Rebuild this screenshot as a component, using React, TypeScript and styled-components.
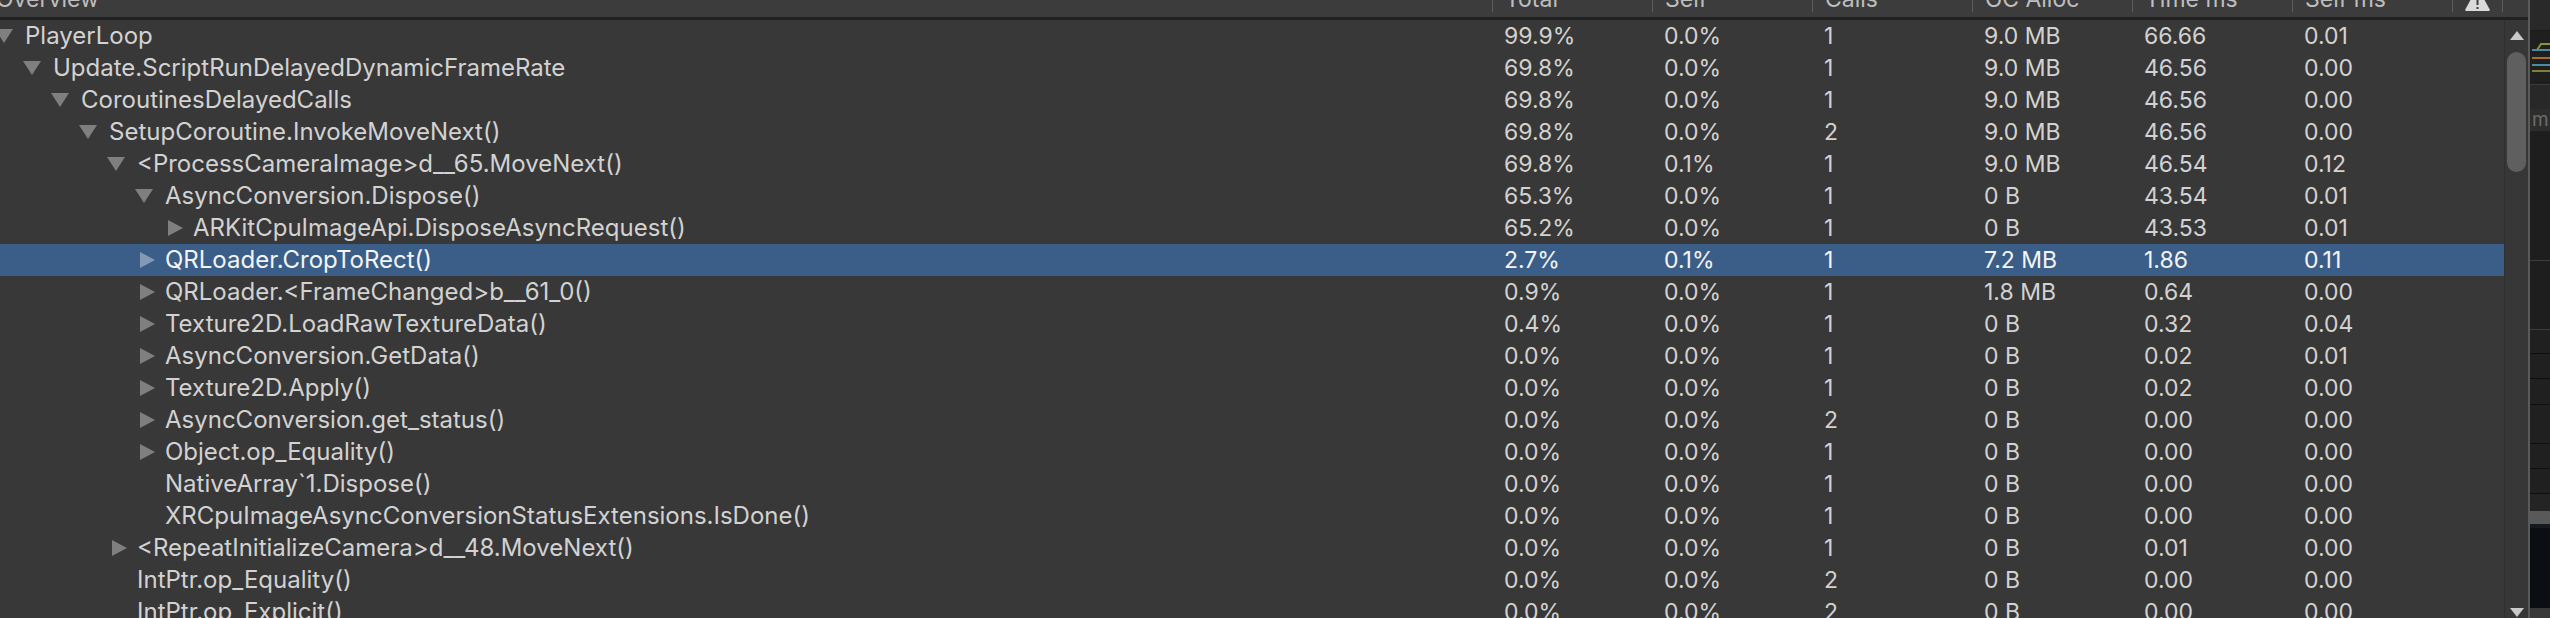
import React from 'react';
import styled, { createGlobalStyle } from 'styled-components';

type Fold = 'open' | 'closed' | 'none';

interface Sample {
  name: string;
  depth: number;
  fold: Fold;
  total: string;
  self: string;
  calls: string;
  gc: string;
  time: string;
  selfMs: string;
  selected?: boolean;
}

const samples: Sample[] = [
  { name: 'PlayerLoop', depth: 0, fold: 'open', total: '99.9%', self: '0.0%', calls: '1', gc: '9.0 MB', time: '66.66', selfMs: '0.01' },
  { name: 'Update.ScriptRunDelayedDynamicFrameRate', depth: 1, fold: 'open', total: '69.8%', self: '0.0%', calls: '1', gc: '9.0 MB', time: '46.56', selfMs: '0.00' },
  { name: 'CoroutinesDelayedCalls', depth: 2, fold: 'open', total: '69.8%', self: '0.0%', calls: '1', gc: '9.0 MB', time: '46.56', selfMs: '0.00' },
  { name: 'SetupCoroutine.InvokeMoveNext()', depth: 3, fold: 'open', total: '69.8%', self: '0.0%', calls: '2', gc: '9.0 MB', time: '46.56', selfMs: '0.00' },
  { name: '<ProcessCameraImage>d__65.MoveNext()', depth: 4, fold: 'open', total: '69.8%', self: '0.1%', calls: '1', gc: '9.0 MB', time: '46.54', selfMs: '0.12' },
  { name: 'AsyncConversion.Dispose()', depth: 5, fold: 'open', total: '65.3%', self: '0.0%', calls: '1', gc: '0 B', time: '43.54', selfMs: '0.01' },
  { name: 'ARKitCpuImageApi.DisposeAsyncRequest()', depth: 6, fold: 'closed', total: '65.2%', self: '0.0%', calls: '1', gc: '0 B', time: '43.53', selfMs: '0.01' },
  { name: 'QRLoader.CropToRect()', depth: 5, fold: 'closed', total: '2.7%', self: '0.1%', calls: '1', gc: '7.2 MB', time: '1.86', selfMs: '0.11', selected: true },
  { name: 'QRLoader.<FrameChanged>b__61_0()', depth: 5, fold: 'closed', total: '0.9%', self: '0.0%', calls: '1', gc: '1.8 MB', time: '0.64', selfMs: '0.00' },
  { name: 'Texture2D.LoadRawTextureData()', depth: 5, fold: 'closed', total: '0.4%', self: '0.0%', calls: '1', gc: '0 B', time: '0.32', selfMs: '0.04' },
  { name: 'AsyncConversion.GetData()', depth: 5, fold: 'closed', total: '0.0%', self: '0.0%', calls: '1', gc: '0 B', time: '0.02', selfMs: '0.01' },
  { name: 'Texture2D.Apply()', depth: 5, fold: 'closed', total: '0.0%', self: '0.0%', calls: '1', gc: '0 B', time: '0.02', selfMs: '0.00' },
  { name: 'AsyncConversion.get_status()', depth: 5, fold: 'closed', total: '0.0%', self: '0.0%', calls: '2', gc: '0 B', time: '0.00', selfMs: '0.00' },
  { name: 'Object.op_Equality()', depth: 5, fold: 'closed', total: '0.0%', self: '0.0%', calls: '1', gc: '0 B', time: '0.00', selfMs: '0.00' },
  { name: 'NativeArray`1.Dispose()', depth: 5, fold: 'none', total: '0.0%', self: '0.0%', calls: '1', gc: '0 B', time: '0.00', selfMs: '0.00' },
  { name: 'XRCpuImageAsyncConversionStatusExtensions.IsDone()', depth: 5, fold: 'none', total: '0.0%', self: '0.0%', calls: '1', gc: '0 B', time: '0.00', selfMs: '0.00' },
  { name: '<RepeatInitializeCamera>d__48.MoveNext()', depth: 4, fold: 'closed', total: '0.0%', self: '0.0%', calls: '1', gc: '0 B', time: '0.01', selfMs: '0.00' },
  { name: 'IntPtr.op_Equality()', depth: 4, fold: 'none', total: '0.0%', self: '0.0%', calls: '2', gc: '0 B', time: '0.00', selfMs: '0.00' },
  { name: 'IntPtr.op_Explicit()', depth: 4, fold: 'none', total: '0.0%', self: '0.0%', calls: '2', gc: '0 B', time: '0.00', selfMs: '0.00' },
];

const columns = ['Total', 'Self', 'Calls', 'GC Alloc', 'Time ms', 'Self ms'];

// side strip of the next panel (timeline chart, cut off at the right edge)
const strip: Array<{ h: number; bg: string; line?: string }> = [
  { h: 31, bg: '#292929', line: '#1a1a1a' },
  { h: 54, bg: '#1f1f1f', line: '#3c3c3c' },
  { h: 24, bg: '#282828' },
  { h: 22, bg: '#2d2d2d' },
  { h: 130, bg: '#1e1e1e', line: '#3d3d3d' },
  { h: 69, bg: '#1e1e1e', line: '#3d3d3d' },
  { h: 24, bg: '#202020', line: '#0d0d0d' },
  { h: 25, bg: '#202020', line: '#0d0d0d' },
  { h: 26, bg: '#202020', line: '#0d0d0d' },
  { h: 39, bg: '#202020', line: '#0d0d0d' },
  { h: 25, bg: '#202020', line: '#0d0d0d' },
  { h: 25, bg: '#202020', line: '#0d0d0d' },
  { h: 17, bg: '#242424' },
  { h: 13, bg: '#595959' },
  { h: 4, bg: '#161a1f' },
  { h: 80, bg: '#0b0f14' },
];

const GlobalStyle = createGlobalStyle`
  html, body {
    margin: 0;
    padding: 0;
    background: #383838;
    overflow: hidden;
  }
  body {
    font-family: Inter, "Noto Sans", sans-serif;
  }
`;

const Window = styled.div`
  display: flex;
  width: 2550px;
  height: 618px;
  overflow: hidden;
  background: #383838;
`;

const Hierarchy = styled.div`
  flex: 0 0 2528px;
  display: flex;
  flex-direction: column;
  min-width: 0;
`;

const HeaderBar = styled.div`
  flex: 0 0 17px;
  display: flex;
  background: #3c3c3c;
  border-bottom: 3px solid #212121;
  overflow: hidden;
`;

const HeaderCell = styled.div<{ $w?: number; $pad: number; $sep?: boolean }>`
  position: relative;
  flex: ${p => (p.$w ? `0 0 ${p.$w}px` : '1 1 auto')};
  height: 17px;
  padding-left: ${p => p.$pad}px;
  box-sizing: border-box;
  overflow: hidden;
  color: #bebebe;
  font-size: 23px;
  line-height: 23px;
  white-space: nowrap;

  &::after {
    content: '';
    display: ${p => (p.$sep ? 'block' : 'none')};
    position: absolute;
    right: 0;
    top: 0;
    width: 1px;
    height: 12px;
    background: #5c5c5c;
  }
`;

const HeaderLabel = styled.span<{ $shift?: number }>`
  display: block;
  margin-top: -12px;
  margin-left: ${p => p.$shift || 0}px;
`;

const WarnIcon = styled.div`
  display: flex;
  justify-content: center;
  padding-right: 2px;
`;

const Body = styled.div`
  flex: 1 1 auto;
  display: flex;
  min-height: 0;
`;

const Rows = styled.div`
  flex: 0 0 2504px;
  display: flex;
  flex-direction: column;
  overflow: hidden;
`;

const Row = styled.div<{ $selected?: boolean }>`
  flex: 0 0 32px;
  display: flex;
  align-items: center;
  background: ${p => (p.$selected ? '#3a5e88' : 'transparent')};
  color: ${p => (p.$selected ? '#f4f4f4' : '#d2d2d2')};
  font-size: 23px;
  line-height: 32px;
  white-space: nowrap;
`;

const NameCell = styled.div<{ $depth: number }>`
  flex: 0 0 1493px;
  display: flex;
  align-items: center;
  height: 32px;
  padding-left: ${p => p.$depth * 28}px;
  box-sizing: border-box;
  overflow: hidden;
  font-size: 24px;
`;

const FoldSlot = styled.div<{ $fold: Fold; $selected?: boolean }>`
  flex: 0 0 30px;
  height: 32px;
  margin-left: -5px;
  padding-left: ${p => (p.$fold === 'closed' ? 5 : 0)}px;
  box-sizing: border-box;
  display: flex;
  align-items: center;
  color: ${p => (p.$selected ? '#8499b3' : '#7f7f7f')};
`;

const ValueCell = styled.div`
  flex: 0 0 160px;
  padding-left: 11px;
  box-sizing: border-box;
  overflow: hidden;
`;

const ScrollTrack = styled.div`
  flex: 0 0 24px;
  display: flex;
  flex-direction: column;
  align-items: center;
  padding-top: 11px;
  box-sizing: border-box;
  background: #373737;
  border-left: 1px solid #2f2f2f;
`;

const Thumb = styled.div`
  flex: 0 0 120px;
  width: 19px;
  margin-top: 12px;
  border-radius: 10px;
  background: #5f5f5f;
`;

const TrackSpacer = styled.div`
  flex: 1 1 auto;
`;

const ArrowGlyph = styled.svg<{ $bottom?: boolean }>`
  flex: 0 0 auto;
  display: block;
  margin-bottom: ${p => (p.$bottom ? 1 : 0)}px;
`;

const Divider = styled.div`
  flex: 0 0 2px;
  background: #5a5a5a;
`;

const SidePanel = styled.div`
  flex: 1 1 auto;
  display: flex;
  flex-direction: column;
  overflow: hidden;
`;

const Band = styled.div<{ $h: number; $bg: string; $line?: string }>`
  position: relative;
  flex: 0 0 ${p => p.$h}px;
  background: ${p => p.$bg};
  border-bottom: ${p => (p.$line ? `1px solid ${p.$line}` : 'none')};
  box-sizing: border-box;
  overflow: hidden;
  color: #6b6b6b;
  font-size: 19px;
  line-height: ${p => p.$h}px;
  padding-left: 2px;
  white-space: nowrap;
`;

const FoldArrow: React.FC<{ fold: Fold }> = ({ fold }) => {
  if (fold === 'open') {
    return (
      <svg width="18" height="14" viewBox="0 0 18 14">
        <polygon points="0,0 18,0 9,14" fill="currentColor" />
      </svg>
    );
  }
  if (fold === 'closed') {
    return (
      <svg width="15" height="16" viewBox="0 0 15 16">
        <polygon points="0,0 15,8 0,16" fill="currentColor" />
      </svg>
    );
  }
  return null;
};

const TimelineLines: React.FC = () => (
  <svg width="20" height="53" viewBox="0 0 20 53" style={{ display: 'block' }}>
    <polyline points="0,19 5,19 9,13 20,13" fill="none" stroke="#8f8f3c" strokeWidth="2" />
    <line x1="0" y1="19" x2="20" y2="19" stroke="#4b8ba3" strokeWidth="2" />
    <line x1="0" y1="27" x2="20" y2="27" stroke="#a86c2e" strokeWidth="2" />
    <line x1="0" y1="34" x2="20" y2="34" stroke="#4b8ba3" strokeWidth="2" />
    <line x1="0" y1="40" x2="20" y2="40" stroke="#7f7f36" strokeWidth="2" />
  </svg>
);

const App: React.FC = () => {
  return (
    <>
      <GlobalStyle />
      <Window>
        <Hierarchy>
          <HeaderBar>
            <HeaderCell $w={1493} $pad={0} $sep>
              <HeaderLabel $shift={-4}>Overview</HeaderLabel>
            </HeaderCell>
            {columns.map(c => (
              <HeaderCell key={c} $w={160} $pad={12} $sep>
                <HeaderLabel>{c}</HeaderLabel>
              </HeaderCell>
            ))}
            <HeaderCell $w={50} $pad={0} $sep>
              <WarnIcon>
                <svg width="25" height="11" viewBox="0 0 25 11">
                  <polygon points="6,-1 19,-1 25,10 24,11 1,11 0,10" fill="#dadada" />
                  <rect x="11.5" y="0" width="2" height="5" fill="#3c3c3c" />
                  <rect x="11.5" y="7" width="2" height="2" fill="#3c3c3c" />
                </svg>
              </WarnIcon>
            </HeaderCell>
            <HeaderCell $pad={0} />
          </HeaderBar>

          <Body>
            <Rows>
              {samples.map((s, i) => (
                <Row key={i} $selected={s.selected}>
                  <NameCell $depth={s.depth}>
                    <FoldSlot $fold={s.fold} $selected={s.selected}>
                      <FoldArrow fold={s.fold} />
                    </FoldSlot>
                    {s.name}
                  </NameCell>
                  <ValueCell>{s.total}</ValueCell>
                  <ValueCell>{s.self}</ValueCell>
                  <ValueCell>{s.calls}</ValueCell>
                  <ValueCell>{s.gc}</ValueCell>
                  <ValueCell>{s.time}</ValueCell>
                  <ValueCell>{s.selfMs}</ValueCell>
                </Row>
              ))}
            </Rows>

            <ScrollTrack>
              <ArrowGlyph width="14" height="9" viewBox="0 0 14 9">
                <polygon points="7,0 14,9 0,9" fill="#c9c9c9" />
              </ArrowGlyph>
              <Thumb />
              <TrackSpacer />
              <ArrowGlyph width="14" height="9" viewBox="0 0 14 9" $bottom>
                <polygon points="0,0 14,0 7,9" fill="#c9c9c9" />
              </ArrowGlyph>
            </ScrollTrack>
          </Body>
        </Hierarchy>

        <Divider />

        <SidePanel>
          {strip.map((b, i) => (
            <Band key={i} $h={b.h} $bg={b.bg} $line={b.line}>
              {i === 1 && <TimelineLines />}
              {i === 3 && 'ms'}
            </Band>
          ))}
        </SidePanel>
      </Window>
    </>
  );
};

export default App;
